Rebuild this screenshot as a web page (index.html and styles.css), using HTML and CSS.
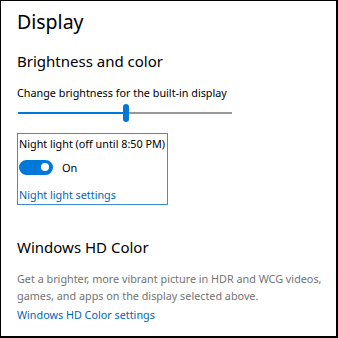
FILE: index.html
```html
<!DOCTYPE html>
<html lang="en">
<head>
    <meta charset="UTF-8">
    <title>Display</title>
    <link rel="stylesheet" href="styles.css">
</head>
<body>
    <div class="window">
        <h1 class="page-title">Display</h1>

        <section class="group">
            <h2 class="group-title">Brightness and color</h2>
            <p class="label slider-label">Change brightness for the built-in display</p>
            <div class="slider">
                <div class="slider-fill"></div>
                <div class="slider-thumb"></div>
                <div class="slider-rest"></div>
            </div>

            <div class="night-box">
                <p class="label">Night light (off until 8:50 PM)</p>
                <div class="toggle-row">
                    <span class="toggle"><span class="toggle-knob"></span></span>
                    <span class="toggle-text">On</span>
                </div>
                <a class="link" href="#">Night light settings</a>
            </div>
        </section>

        <section class="group hd">
            <h2 class="group-title">Windows HD Color</h2>
            <p class="desc">Get a brighter, more vibrant picture in HDR and WCG videos, games, and apps on the display selected above.</p>
            <a class="link" href="#">Windows HD Color settings</a>
        </section>
    </div>
</body>
</html>
```

FILE: styles.css
```css
/* Базовые стили */
body {
    margin: 0;
    padding: 0;
    background: #fff;
    font-family: 'Segoe UI', 'Noto Sans', sans-serif;
    color: #000;
}

.window {
    width: 338px;
    height: 338px;
    box-sizing: border-box;
    border-style: solid;
    border-color: #000;
    border-width: 1px 2px 2px 1px;
    padding: 5px 0 0 16px;
    overflow: hidden;
}

.page-title {
    margin: 0;
    font-size: 19.5px;
    font-weight: 400;
    line-height: 32px;
}

.group-title {
    margin: 12px 0 0;
    font-size: 15px;
    font-weight: 400;
    line-height: 22px;
}

.label {
    margin: 0;
    font-size: 10.8px;
    line-height: 16px;
}

.slider-label {
    margin-top: 13px;
}

.slider {
    display: flex;
    align-items: center;
    width: 214px;
    height: 18px;
    margin: 3px 0 0 1px;
}

.slider-fill {
    width: 105px;
    height: 2px;
    background: #0078d7;
}

.slider-thumb {
    width: 6px;
    height: 18px;
    border-radius: 3px;
    background: #0078d7;
}

.slider-rest {
    flex: 1;
    height: 2px;
    background: #999;
}

.night-box {
    width: 151px;
    height: 72px;
    box-sizing: border-box;
    margin-top: 11px;
    border: 1px solid #3c8fd6;
    padding: 2px 0 0 1px;
}

.toggle-row {
    display: flex;
    align-items: center;
    margin-top: 7px;
    height: 16px;
}

.toggle {
    display: flex;
    align-items: center;
    justify-content: flex-end;
    width: 34px;
    height: 15px;
    border-radius: 8px;
    background: #0078d7;
    box-sizing: border-box;
    padding-right: 4px;
}

.toggle-knob {
    width: 8px;
    height: 8px;
    border-radius: 50%;
    background: #fff;
}

.toggle-text {
    margin-left: 9px;
    font-size: 11px;
}

.link {
    display: block;
    color: #0067b8;
    text-decoration: none;
    font-size: 10.8px;
    line-height: 16px;
}

.night-box .link {
    margin-top: 12px;
}

.hd .group-title {
    margin-top: 31px;
}

.desc {
    margin: 12px 0 0;
    width: 318px;
    font-size: 10.8px;
    line-height: 17px;
    color: #737373;
}

.hd .link {
    margin-top: 3px;
}
```
